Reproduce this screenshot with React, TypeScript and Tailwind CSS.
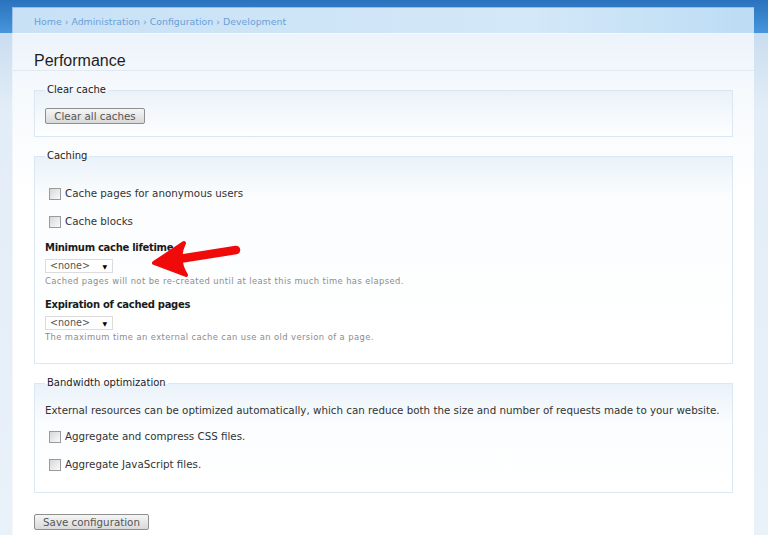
import React from 'react';

const body = { fontFamily: '"DejaVu Sans", Verdana, sans-serif' };

const Checkbox: React.FC<{ label: string }> = ({ label }) => (
  <label className="flex items-center h-[14px] text-[10.3px] text-[#333]">
    <input
      type="checkbox"
      className="appearance-none ml-[4px] mr-[4px] w-[12px] h-[12px] border border-[#9a9a9a] bg-gradient-to-br from-[#d8d8d8] to-[#fafafa]"
    />
    {label}
  </label>
);

const Select: React.FC = () => (
  <div className="flex items-center justify-between w-[68px] h-[14px] border border-[#dcdcdc] bg-white pl-[4px] pr-[5px] text-[9.6px] text-[#555]">
    <span>&lt;none&gt;</span>
    <span className="text-[6px] text-black">▼</span>
  </div>
);

const Button: React.FC<{ children: React.ReactNode; w: string }> = ({ children, w }) => (
  <button
    className={`${w} h-[16px] border border-[#8f8f8f] rounded-[2px] bg-gradient-to-b from-[#f6f6f6] to-[#d9d9d9] text-[10.3px] leading-[14px] text-[#555]`}
  >
    {children}
  </button>
);

const Fieldset: React.FC<{ legend: string; className?: string; children: React.ReactNode }> = ({
  legend,
  className = '',
  children,
}) => (
  <fieldset
    className={`border border-[#dbe8f4] px-[10px] bg-[linear-gradient(to_bottom,#eaf2f9_0,#fbfdfe_40px,#ffffff_100%)] ${className}`}
  >
    <legend className="px-[2px] text-[10px] leading-[14px] text-[#222]">{legend}</legend>
    {children}
  </fieldset>
);

export default function App() {
  return (
    <div
      className="relative w-[768px] h-[535px] overflow-hidden bg-[linear-gradient(to_bottom,#2a72bd_0,#4796dc_33px,#c9ddf0_33px,#e3edf7_110px,#e9f1f9_100%)]"
      style={body}
    >
      <div className="ml-[12px] mt-[7px] w-[742px] h-[540px] border-l border-t border-white/50 flex flex-col">
        {/* breadcrumb */}
        <div className="h-[26px] flex items-center pt-[3px] pl-[21px] bg-[linear-gradient(to_right,#c8e1f6,#d3e8f8_70%,#bcdcf4)] border-b border-white/80 text-[9.4px] text-[#6aa0d6]">
          Home › Administration › Configuration › Development
        </div>

        <div className="flex-1 bg-[linear-gradient(to_bottom,#ecf3fa_0,#f4f8fc_40px,#ffffff_160px,#ffffff_100%)]">
          {/* title */}
          <div className="h-[37px] pt-[17px] pl-[21px] border-b border-[#e1eaf3]">
            <h1
              className="text-[16px] leading-[20px] text-[#1e1e1e]"
              style={{ fontFamily: '"Liberation Sans", Arial, sans-serif' }}
            >
              Performance
            </h1>
          </div>

          <div className="px-[21px] pt-[12px]">
            <Fieldset legend="Clear cache">
              <div className="flex pt-[11px] pb-[12px]">
                <Button w="w-[100px]">Clear all caches</Button>
              </div>
            </Fieldset>

            <Fieldset legend="Caching" className="mt-[12px]">
              <div className="relative pt-[24px] pb-[20px]">
                <Checkbox label="Cache pages for anonymous users" />
                <div className="mt-[14px]">
                  <Checkbox label="Cache blocks" />
                </div>
                <div className="mt-[12px] text-[10px] leading-[14px] font-bold tracking-[-0.3px] text-[#1a1a1a]">
                  Minimum cache lifetime
                </div>
                <div className="mt-[4px]">
                  <Select />
                </div>
                <div className="mt-[2px] text-[8.4px] leading-[12px] tracking-[0.4px] text-[#8c8c8c]">
                  Cached pages will not be re-created until at least this much time has elapsed.
                </div>
                <div className="mt-[11px] text-[10px] leading-[14px] font-bold tracking-[-0.3px] text-[#1a1a1a]">
                  Expiration of cached pages
                </div>
                <div className="mt-[4px]">
                  <Select />
                </div>
                <div className="mt-[1px] text-[8.4px] leading-[12px] tracking-[0.4px] text-[#8c8c8c]">
                  The maximum time an external cache can use an old version of a page.
                </div>

                {/* red annotation arrow */}
                <svg
                  className="absolute left-[94px] top-[72px]"
                  width="110"
                  height="48"
                  viewBox="0 0 110 48"
                >
                  <path d="M40 24 L97 15" stroke="#f00a0a" strokeWidth="8.5" strokeLinecap="round" fill="none" />
                  <path d="M15 28 L45 8 Q37 24 47 40 Z" fill="#f00a0a" stroke="#f00a0a" strokeWidth="4" strokeLinejoin="round" />
                </svg>
              </div>
            </Fieldset>

            <Fieldset legend="Bandwidth optimization" className="mt-[12px]">
              <div className="pt-[13px] pb-[20px]">
                <p className="text-[10.3px] leading-[14px] text-[#333]">
                  External resources can be optimized automatically, which can reduce both the size and number of
                  requests made to your website.
                </p>
                <div className="mt-[13px]">
                  <Checkbox label="Aggregate and compress CSS files." />
                </div>
                <div className="mt-[14px]">
                  <Checkbox label="Aggregate JavaScript files." />
                </div>
              </div>
            </Fieldset>

            <div className="flex mt-[21px]">
              <Button w="w-[115px]">Save configuration</Button>
            </div>
          </div>
        </div>
      </div>
    </div>
  );
}
